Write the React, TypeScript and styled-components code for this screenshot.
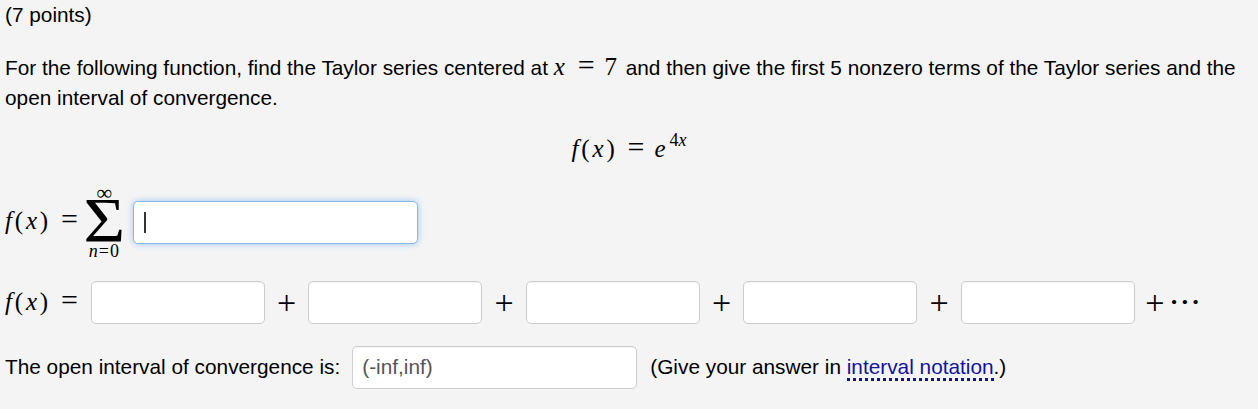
import React from "react";
import styled, { createGlobalStyle } from "styled-components";

const Global = createGlobalStyle`
  html, body {
    margin: 0;
    padding: 0;
    background: #f4f4f4;
  }
  body {
    font-family: Arial, "Liberation Sans", Helvetica, sans-serif;
    font-size: 20.8px;
    color: #000;
  }
`;

const Page = styled.div`
  padding: 0 5px;
  width: 1248px;
  box-sizing: border-box;
`;

const Points = styled.div`
  line-height: 30px;
`;

const Prompt = styled.p`
  margin: 23px 0 0;
  line-height: 30px;
  width: 1245px;
`;

const M = styled.span<{ $up?: boolean }>`
  font-family: "Liberation Serif", "Times New Roman", serif;
  font-style: ${(p) => (p.$up ? "normal" : "italic")};
  font-size: 25px;
  line-height: 0;
  letter-spacing: 2.8px;
`;

const Rel = styled.span`
  font-family: "Liberation Serif", "Times New Roman", serif;
  font-size: 30px;
  line-height: 0;
  margin: 0 10px;
`;

const Sup = styled.sup`
  font-family: "Liberation Serif", "Times New Roman", serif;
  font-size: 18px;
  vertical-align: 11px;
  line-height: 0;
  margin-left: 1px;
`;

const DisplayMath = styled.div`
  margin-top: 22px;
  height: 30px;
  line-height: 30px;
  text-align: center;
  padding-left: 10px;
`;

const Row = styled.div<{ $top: number; $height: number }>`
  display: flex;
  align-items: center;
  margin-top: ${(p) => p.$top}px;
  height: ${(p) => p.$height}px;
  white-space: nowrap;
`;

const Func = styled.span<{ $after: number }>`
  display: inline-block;
  line-height: 30px;
  margin-right: ${(p) => p.$after}px;
  flex-shrink: 0;
`;

const SigmaStack = styled.span`
  display: inline-flex;
  flex-direction: column;
  align-items: center;
  width: 33px;
  margin-right: 12px;
  font-family: "Liberation Serif", "Times New Roman", serif;
  flex-shrink: 0;
`;

const Limit = styled.span<{ $size: number; $h: number; $lh: number; $ls?: number }>`
  font-size: ${(p) => p.$size}px;
  line-height: ${(p) => p.$lh}px;
  height: ${(p) => p.$h}px;
  letter-spacing: ${(p) => p.$ls ?? 0}px;
  position: relative;
  z-index: 1;
`;

const Sigma = styled.span`
  display: inline-block;
  font-size: 53px;
  line-height: 36px;
  height: 36px;
  transform: translateY(2px) scale(1.35, 1.2);
`;

const Box = styled.div<{ $w: number; $focused?: boolean }>`
  box-sizing: border-box;
  width: ${(p) => p.$w}px;
  height: 43px;
  background: #fff;
  border: 1px solid ${(p) => (p.$focused ? "#86b9e6" : "#cccccc")};
  border-radius: 5px;
  box-shadow: ${(p) =>
    p.$focused ? "0 0 6px rgba(82, 160, 236, 0.55)" : "inset 0 1px 1px rgba(0,0,0,0.04)"};
  display: flex;
  align-items: center;
  padding-left: 9px;
  flex-shrink: 0;
  color: #555;
  font-size: 20.8px;
`;

const Caret = styled.span`
  display: block;
  width: 2px;
  height: 21px;
  background: #333;
  margin-left: 1px;
`;

const Plus = styled.span<{ $w: number }>`
  display: inline-block;
  width: ${(p) => p.$w}px;
  text-align: center;
  font-family: "Liberation Serif", "Times New Roman", serif;
  font-size: 34px;
  line-height: 30px;
  flex-shrink: 0;
`;

const Dots = styled.span`
  font-family: "Liberation Serif", "Times New Roman", serif;
  font-size: 26px;
  letter-spacing: 2px;
  margin-left: -5px;
  font-weight: bold;
  position: relative;
  top: -1px;
`;

const Label = styled.span`
  margin-right: 12px;
`;

const Hint = styled.span`
  margin-left: 13px;
`;

const Link = styled.span`
  color: #12129c;
  border-bottom: 3px dotted #12129c;
`;

function Fx({ after }: { after: number }) {
  return (
    <Func $after={after}>
      <M>f</M>
      <M $up>(</M>
      <M>x</M>
      <M $up>)</M>
      <Rel>=</Rel>
    </Func>
  );
}

export default function App() {
  const terms = [0, 1, 2, 3, 4];
  return (
    <>
      <Global />
      <Page>
        <Points>(7 points)</Points>
        <Prompt>
          For the following function, find the Taylor series centered at <M>x</M>
          <Rel>=</Rel>
          <M $up>7</M> and then give the first 5 nonzero terms of the Taylor series and the open
          interval of convergence.
        </Prompt>
        <DisplayMath>
          <M>f</M>
          <M $up>(</M>
          <M>x</M>
          <M $up>)</M>
          <Rel>=</Rel>
          <M>e</M>
          <Sup>
            4<i>x</i>
          </Sup>
        </DisplayMath>

        <Row $top={20} $height={74}>
          <Fx after={0} />
          <SigmaStack>
            <Limit $size={22} $h={15} $lh={15}>∞</Limit>
            <Sigma>Σ</Sigma>
            <Limit $size={18} $h={24} $lh={31} $ls={1}>
              <i>n</i>=0
            </Limit>
          </SigmaStack>
          <Box $w={285} $focused>
            <Caret />
          </Box>
        </Row>

        <Row $top={22} $height={43}>
          <Fx after={3} />
          {terms.map((t) => (
            <React.Fragment key={t}>
              <Box $w={174} />
              {t < 4 ? <Plus $w={43.5}>+</Plus> : null}
            </React.Fragment>
          ))}
          <Plus $w={40}>+</Plus>
          <Dots>···</Dots>
        </Row>

        <Row $top={21.5} $height={43}>
          <Label>The open interval of convergence is:</Label>
          <Box $w={285}>(-inf,inf)</Box>
          <Hint>
            (Give your answer in <Link>interval notation</Link>.)
          </Hint>
        </Row>
      </Page>
    </>
  );
}
